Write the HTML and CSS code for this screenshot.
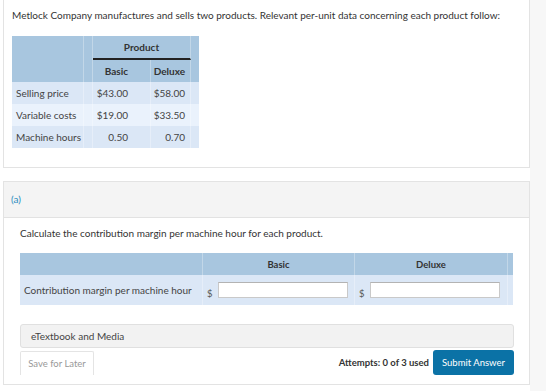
FILE: index.html
```html
<!DOCTYPE html>
<html lang="en">
<head>
    <meta charset="UTF-8">
    <meta name="viewport" content="width=device-width, initial-scale=1.0">
    <title>Metlock Company - Question</title>
    <link rel="stylesheet" href="styles.css">
</head>
<body>
    <div class="page">
        <section class="panel intro">
            <p class="lead">Metlock Company manufactures and sells two products. Relevant per-unit data concerning each product follow:</p>
            <table class="data">
                <colgroup>
                    <col class="c-label"><col class="c-gap"><col class="c-basic"><col class="c-deluxe"><col class="c-end">
                </colgroup>
                <tr class="head">
                    <td></td><td></td>
                    <th colspan="2" class="group">Product</th>
                    <td></td>
                </tr>
                <tr class="head">
                    <td></td><td></td>
                    <th class="num pad">Basic</th>
                    <th class="num">Deluxe</th>
                    <td></td>
                </tr>
                <tr class="row">
                    <td class="label">Selling price</td><td></td>
                    <td class="num pad">$43.00</td>
                    <td class="num">$58.00</td>
                    <td></td>
                </tr>
                <tr class="row alt">
                    <td class="label">Variable costs</td><td></td>
                    <td class="num pad">$19.00</td>
                    <td class="num">$33.50</td>
                    <td></td>
                </tr>
                <tr class="row">
                    <td class="label">Machine hours</td><td></td>
                    <td class="num pad">0.50</td>
                    <td class="num">0.70</td>
                    <td></td>
                </tr>
            </table>
        </section>

        <section class="panel part">
            <div class="part-head">(a)</div>
            <div class="part-body">
                <p class="question">Calculate the contribution margin per machine hour for each product.</p>
                <table class="answer">
                    <colgroup>
                        <col class="a-label"><col class="a-basic"><col class="a-deluxe"><col class="a-end">
                    </colgroup>
                    <tr class="head">
                        <td></td>
                        <th>Basic</th>
                        <th>Deluxe</th>
                        <td></td>
                    </tr>
                    <tr class="row">
                        <td class="label">Contribution margin per machine hour</td>
                        <td><span class="cur">$</span><input class="field" type="text"></td>
                        <td><span class="cur">$</span><input class="field" type="text"></td>
                        <td></td>
                    </tr>
                </table>
                <div class="media">eTextbook and Media</div>
                <div class="actions">
                    <button class="save">Save for Later</button>
                    <div class="submit-wrap">
                        <span class="attempts">Attempts: 0 of 3 used</span>
                        <button class="submit">Submit Answer</button>
                    </div>
                </div>
            </div>
        </section>
    </div>
</body>
</html>
```

FILE: styles.css
```css
* {
    margin: 0;
    padding: 0;
    box-sizing: border-box;
}

body {
    background: #f7f7f7;
    font-family: Lato, "Open Sans", Arial, sans-serif;
    font-size: 10px;
    color: #333;
}

.page {
    width: 530px;
    min-height: 391px;
    padding-left: 3px;
    background: #fff;
}

.panel {
    width: 527px;
    border: 1px solid #e3e3e3;
}

/* intro block */

.intro {
    border-top: none;
    padding: 8px 8px 19px;
}

.lead {
    line-height: 14px;
    margin-bottom: 14px;
}

table {
    border-collapse: separate;
    border-spacing: 0;
    table-layout: fixed;
}

.data {
    width: 187px;
}

.c-label { width: 72px; }
.c-gap { width: 9px; }
.c-basic { width: 58px; }
.c-deluxe { width: 40px; }
.c-end { width: 8px; }

.data td,
.data th,
.answer td,
.answer th {
    border-right: 1px solid rgba(255, 255, 255, 0.3);
    padding: 0;
    white-space: nowrap;
}

.data td:last-child,
.answer td:last-child {
    border-right: none;
}

.head {
    background: #a8c6df;
}

.head th {
    font-weight: bold;
    color: #333;
}

.data .head td,
.data .head th {
    height: 22px;
}

.data .head:first-child td {
    height: 24px;
}

.group {
    text-align: center;
    border-bottom: 2px solid #222;
}

.row {
    background: #dbe7f6;
}

.row.alt {
    background: #eaf2fc;
}

.data .row td {
    height: 22px;
    color: #444;
}

.label {
    padding-left: 4px !important;
    color: #444;
}

.num {
    text-align: right;
    padding-right: 5px !important;
}

.num.pad {
    padding-right: 22px !important;
}

/* part (a) */

.part {
    margin-top: 13px;
    padding-bottom: 9px;
}

.part-head {
    height: 36px;
    line-height: 35px;
    padding-left: 7px;
    background: #f4f4f4;
    border-bottom: 1px solid #e2e2e2;
    color: #2a8dc0;
}

.part-body {
    padding: 8px 15px 0 16px;
}

.question {
    line-height: 14px;
    margin-bottom: 13px;
}

.answer {
    width: 493px;
}

.a-label { width: 183px; }
.a-basic { width: 152px; }
.a-deluxe { width: 153px; }
.a-end { width: 5px; }

.answer .head th {
    height: 22px;
    text-align: center;
    font-size: 9.5px;
}

.answer .row td {
    height: 30px;
    padding-left: 4px;
}

.cur {
    display: inline-block;
    width: 11px;
    padding-top: 6px;
    color: #555;
    font-size: 9.5px;
    vertical-align: middle;
}

.field {
    width: 130px;
    height: 16px;
    border: 1px solid #c9c9c9;
    border-top-color: #b3b3b3;
    background: #fff;
    vertical-align: middle;
}

.media {
    margin-top: 19px;
    height: 24px;
    line-height: 22px;
    padding-left: 10px;
    background: #f2f2f2;
    border: 1px solid #e0e0e0;
    border-radius: 3px;
    color: #444;
}

.actions {
    margin-top: 2px;
    display: flex;
    justify-content: space-between;
    align-items: flex-start;
}

.save {
    margin-top: 1px;
    width: 74px;
    height: 24px;
    background: #fff;
    border: 1px solid #e4e4e4;
    border-bottom: none;
    border-radius: 2px 2px 0 0;
    font-family: inherit;
    font-size: 9.5px;
    color: #999;
}

.submit-wrap {
    display: flex;
    align-items: center;
    gap: 4px;
}

.attempts {
    font-weight: bold;
    font-size: 9.5px;
    color: #333;
}

.submit {
    width: 81px;
    height: 25px;
    background: #0b72a6;
    color: #fff;
    border: none;
    border-radius: 3px;
    font-family: inherit;
    font-size: 9.5px;
}
```
